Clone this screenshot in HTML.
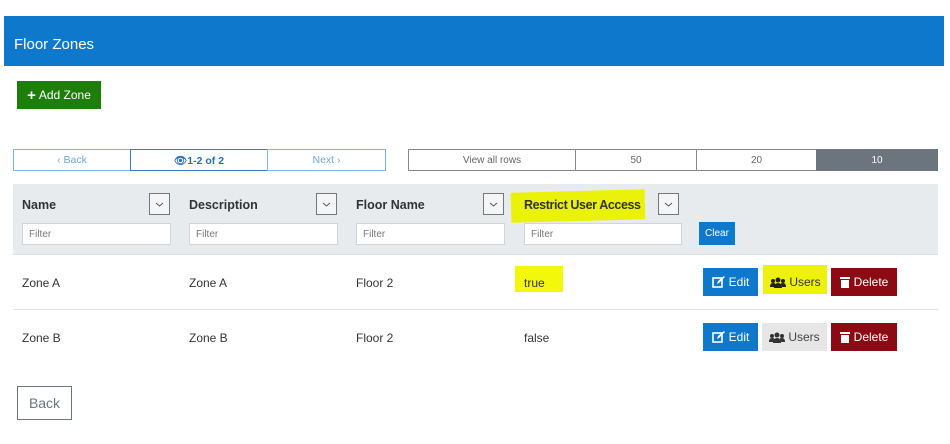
<!DOCTYPE html>
<html><head><style>
*{box-sizing:border-box;margin:0;padding:0}
body{width:950px;height:444px;background:#fff;font-family:"Liberation Sans",sans-serif;position:relative;overflow:hidden;color:#333}
.a{position:absolute}
.c{display:flex;align-items:center;justify-content:center}
.pg{border:1px solid #7fb3e0;color:#6fa8dc;font-size:10.5px}
.rw{border:1px solid #888;color:#666;font-size:10px;background:#fff}
.lab{font-weight:bold;font-size:12.5px;color:#333}
.dd{width:21px;height:22px;border:1px solid #777;background:#f4f5f6}
.dd svg{display:block}
.fi{height:22px;border:1px solid #d0d5da;background:#fff;font-size:10px;color:#777;padding-left:6px;display:flex;align-items:center}
.cell{font-size:12px;color:#333}
.btn{height:28px;font-size:12px;color:#fff;gap:4px}
</style></head><body>
<div class="a" style="left:4px;top:16px;width:940px;height:50px;background:#0e78cc;color:#fff;font-size:15px;padding:20px 0 0 10px">Floor Zones</div>
<div class="a c" style="left:17px;top:81px;width:84px;height:28px;background:#1d7e0c;color:#fff;font-size:12px;gap:3px"><b style="font-size:15px">+</b>Add Zone</div>

<div class="a c pg" style="left:13px;top:149px;width:118px;height:22px">‹ Back</div>
<div class="a c" style="left:130px;top:149px;width:138px;height:22px;border:1px solid #2a7fcf;color:#1f6fbf;font-size:10.5px;font-weight:bold">👁︎1-2 of 2</div>
<div class="a c pg" style="left:267px;top:149px;width:119px;height:22px">Next ›</div>

<div class="a c rw" style="left:408px;top:149px;width:168px;height:22px">View all rows</div>
<div class="a c rw" style="left:575px;top:149px;width:122px;height:22px">50</div>
<div class="a c rw" style="left:696px;top:149px;width:121px;height:22px">20</div>
<div class="a c" style="left:816px;top:149px;width:122px;height:22px;background:#6c757d;color:#fff;font-size:10px">10</div>

<div class="a" style="left:13px;top:184px;width:925px;height:71px;background:#e8ebee;border-bottom:1px solid #d8dde2"></div>
<div class="a" style="left:511px;top:191px;width:134px;height:30px;background:#eaf20a;transform:rotate(-1.5deg)"></div>
<div class="a lab" style="left:22px;top:198px">Name</div>
<div class="a lab" style="left:189px;top:198px">Description</div>
<div class="a lab" style="left:356px;top:198px">Floor Name</div>
<div class="a lab" style="left:524px;top:198px;letter-spacing:-0.4px">Restrict User Access</div>
<div class="a dd" style="left:149px;top:193px"><svg width="19" height="20"><path d="M6 9l3.5 3 3.5-3" fill="none" stroke="#555" stroke-width="1"/></svg></div>
<div class="a dd" style="left:316px;top:193px"><svg width="19" height="20"><path d="M6 9l3.5 3 3.5-3" fill="none" stroke="#555" stroke-width="1"/></svg></div>
<div class="a dd" style="left:483px;top:193px"><svg width="19" height="20"><path d="M6 9l3.5 3 3.5-3" fill="none" stroke="#555" stroke-width="1"/></svg></div>
<div class="a dd" style="left:658px;top:193px"><svg width="19" height="20"><path d="M6 9l3.5 3 3.5-3" fill="none" stroke="#555" stroke-width="1"/></svg></div>
<div class="a fi" style="left:22px;top:223px;width:149px">Filter</div>
<div class="a fi" style="left:189px;top:223px;width:149px">Filter</div>
<div class="a fi" style="left:356px;top:223px;width:149px">Filter</div>
<div class="a fi" style="left:524px;top:223px;width:158px">Filter</div>
<div class="a c" style="left:699px;top:222px;width:36px;height:23px;background:#0e78cc;color:#fff;font-size:10px">Clear</div>

<div class="a" style="left:13px;top:309px;width:925px;height:1px;background:#e0e3e6"></div>
<div class="a" style="left:515px;top:266px;width:48px;height:26px;background:#f3f70a"></div>
<div class="a" style="left:763px;top:265px;width:64px;height:29px;background:#eef20a"></div>

<div class="a cell" style="left:22px;top:276px">Zone A</div>
<div class="a cell" style="left:189px;top:276px">Zone A</div>
<div class="a cell" style="left:356px;top:276px">Floor 2</div>
<div class="a cell" style="left:524px;top:276px">true</div>
<div class="a cell" style="left:22px;top:331px">Zone B</div>
<div class="a cell" style="left:189px;top:331px">Zone B</div>
<div class="a cell" style="left:356px;top:331px">Floor 2</div>
<div class="a cell" style="left:524px;top:331px">false</div>

<div class="a c btn" style="left:703px;top:268px;width:55px;background:#0e78cc"><svg width="13" height="12"><rect x="1" y="2" width="9" height="9" fill="none" stroke="#fff" stroke-width="1.6"/><path d="M5 8l1-3 6-5 1 1-6 6z" fill="#fff"/></svg>Edit</div>
<div class="a c btn" style="left:766px;top:268px;width:59px;color:#333;gap:3px"><svg width="16" height="11"><circle cx="8" cy="3" r="2.5" fill="#222"/><circle cx="3" cy="4" r="2" fill="#222"/><circle cx="13" cy="4" r="2" fill="#222"/><path d="M4 11q0-5 4-5t4 5zM0 10q0-4 3-4t2 1l-1 3zM16 10q0-4-3-4t-2 1l1 3z" fill="#222"/></svg>Users</div>
<div class="a c btn" style="left:831px;top:268px;width:66px;background:#8b0a14"><svg width="10" height="12"><rect x="0" y="1" width="10" height="2" fill="#fff"/><rect x="1" y="4" width="8" height="8" fill="#fff"/></svg>Delete</div>

<div class="a c btn" style="left:703px;top:323px;width:55px;background:#0e78cc"><svg width="13" height="12"><rect x="1" y="2" width="9" height="9" fill="none" stroke="#fff" stroke-width="1.6"/><path d="M5 8l1-3 6-5 1 1-6 6z" fill="#fff"/></svg>Edit</div>
<div class="a c btn" style="left:762px;top:323px;width:65px;background:#e6e6e6;color:#444;gap:3px"><svg width="16" height="11"><circle cx="8" cy="3" r="2.5" fill="#333"/><circle cx="3" cy="4" r="2" fill="#333"/><circle cx="13" cy="4" r="2" fill="#333"/><path d="M4 11q0-5 4-5t4 5zM0 10q0-4 3-4t2 1l-1 3zM16 10q0-4-3-4t-2 1l1 3z" fill="#333"/></svg>Users</div>
<div class="a c btn" style="left:831px;top:323px;width:66px;background:#8b0a14"><svg width="10" height="12"><rect x="0" y="1" width="10" height="2" fill="#fff"/><rect x="1" y="4" width="8" height="8" fill="#fff"/></svg>Delete</div>

<div class="a c" style="left:17px;top:386px;width:55px;height:34px;border:1px solid #6c757d;color:#6c757d;font-size:14px">Back</div>
</body></html>
